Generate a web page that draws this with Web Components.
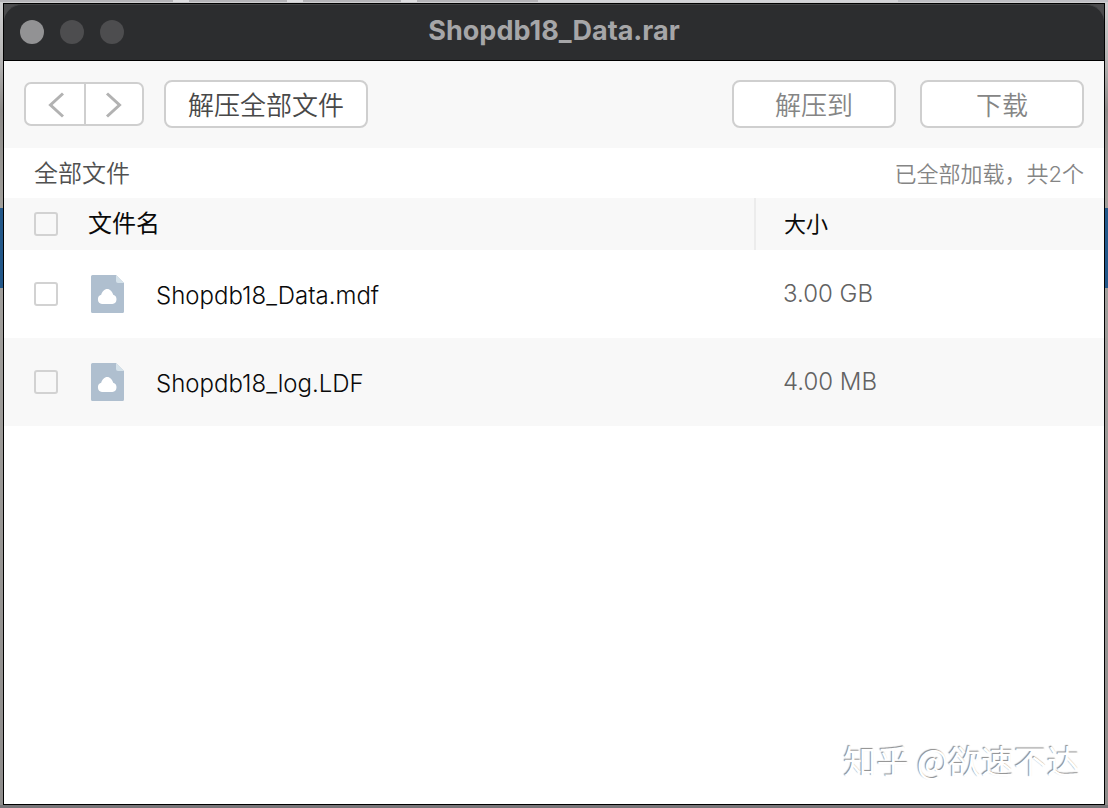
<!DOCTYPE html>
<html lang="zh-CN">
<head>
<meta charset="utf-8">
<meta name="viewport" content="width=device-width, initial-scale=1">
<title>Shopdb18_Data.rar</title>
<style>
  html, body { height: 100%; }
  body {
    margin: 0;
    font-family: Inter, "Noto Sans CJK SC", sans-serif;
    background: #8e8c8c;
  }
</style>
</head>
<body>
<archive-desktop>
  <archive-window>
    <span slot="title">Shopdb18_Data.rar</span>
    <archive-toolbar slot="toolbar">
      <nav-buttons></nav-buttons>
      <tool-button class="strong">解压全部文件</tool-button>
      <tool-button slot="end" wide>解压到</tool-button>
      <tool-button slot="end" wide>下载</tool-button>
    </archive-toolbar>
    <path-bar>
      全部文件
      <span slot="status">已全部加载，共2个</span>
    </path-bar>
    <file-table></file-table>
    <water-mark slot="mark">知乎 @欲速不达</water-mark>
  </archive-window>
</archive-desktop>

<script>
const define = (name, html, setup) => {
  const template = document.createElement('template');
  template.innerHTML = html;
  customElements.define(name, class extends HTMLElement {
    constructor() {
      super();
      this.attachShadow({ mode: 'open' }).append(template.content.cloneNode(true));
      if (setup) setup(this.shadowRoot);
    }
  });
};

/* Backdrop: a thin edge of the apps behind the window */
define('archive-desktop', `
  <style>
    :host {
      display: grid;
      box-sizing: border-box;
      min-height: 100%;
      height: 100%;
      padding: 3px;
      background:
        linear-gradient(90deg, #b4b3b7 173px, #dddde0 173px 189px, #b4b3b7 189px 287px, #dddde0 287px 303px,
          #b4b3b7 303px 401px, #dddde0 401px 417px, #b4b3b7 417px 538px, #d3d3d7 538px 898px, #bdbdc2 898px) top / 100% 2px no-repeat,
        linear-gradient(#777578, #777578) bottom / 100% 3px no-repeat,
        linear-gradient(#d0d0d2, #b5b4b4 60px, #8c8a88 110px, #a19f9b 208px, #23588a 208px 288px, #a09e9b 288px, #8e8c8b);
    }
  </style>
  <slot></slot>
`);

define('archive-window', `
  <style>
    :host {
      display: flex;
      flex-direction: column;
      position: relative;
      border: 1px solid #000;
      background: #fff;
      min-width: 0;
    }
    .frame { background: #4b4b4d; border-bottom: 1px solid #000; }
    header {
      display: grid;
      grid-template-columns: 1fr auto 1fr;
      align-items: center;
      box-sizing: border-box;
      height: 56px;
      padding: 0 16px 2px;
      border-top: 1px solid #434446;
      border-radius: 18px 18px 0 0;
      background: #2c2d2f;
    }
    .lights { display: flex; gap: 16px; }
    .lights i { width: 24px; height: 24px; border-radius: 50%; background: #4d4d4f; }
    .lights i:first-child { background: #929294; }
    h1 { margin: 0; padding-bottom: 2px; font-size: 27px; line-height: 32px; font-weight: 700; color: #a6a6a8; }
    main { flex: 1; }
  </style>
  <div class="frame">
    <header>
      <div class="lights"><i></i><i></i><i></i></div>
      <h1><slot name="title"></slot></h1>
    </header>
  </div>
  <slot name="toolbar"></slot>
  <main><slot></slot></main>
  <slot name="mark"></slot>
`);

define('archive-toolbar', `
  <style>
    :host {
      display: flex;
      justify-content: space-between;
      align-items: center;
      box-sizing: border-box;
      height: 87px;
      padding: 0 20px 2px;
      background: #f8f8f8;
    }
    div { display: flex; align-items: center; gap: 20px; }
    .end { gap: 24px; }
  </style>
  <div><slot></slot></div>
  <div class="end"><slot name="end"></slot></div>
`);

define('nav-buttons', `
  <style>
    :host { display: flex; }
    button {
      display: grid;
      place-items: center;
      box-sizing: border-box;
      width: 60px;
      height: 44px;
      margin: 0;
      padding: 2px 0 0;
      border: 2px solid #cfcfcf;
      background: #fff;
    }
    .back { width: 62px; border-radius: 7px 0 0 7px; }
    .next { width: 58px; border-left: 0; border-radius: 0 7px 7px 0; }
    svg { display: block; fill: none; stroke: #b2b2b2; stroke-width: 3; }
  </style>
  <button class="back" type="button" aria-label="后退">
    <svg width="18" height="26" viewBox="0 0 18 26"><path d="M17 1.500 4.500 13 17 24.500"/></svg>
  </button>
  <button class="next" type="button" aria-label="前进">
    <svg width="18" height="26" viewBox="0 0 18 26"><path d="M2 1.500 14.500 13 2 24.500"/></svg>
  </button>
`);

define('tool-button', `
  <style>
    :host { display: block; color: #858585; }
    :host(.strong) { color: #484848; }
    button {
      display: block;
      box-sizing: border-box;
      height: 48px;
      padding: 0 22px;
      border: 2px solid #cfcfcf;
      border-radius: 8px;
      background: #fff;
      color: inherit;
      font: 350 26px/44px "Noto Sans CJK SC", sans-serif;
      white-space: nowrap;
    }
    :host([wide]) button { min-width: 164px; }
  </style>
  <button type="button"><slot></slot></button>
`);

define('path-bar', `
  <style>
    :host {
      display: flex;
      justify-content: space-between;
      align-items: center;
      box-sizing: border-box;
      height: 50px;
      padding: 2px 20px 0 30px;
      color: #505050;
      font: 350 24px/48px Inter, "Noto Sans CJK SC", sans-serif;
    }
    .status { color: #858585; font-size: 22px; }
  </style>
  <span><slot></slot></span>
  <span class="status"><slot name="status"></slot></span>
`);

const files = [
  { name: 'Shopdb18_Data.mdf', size: '3.00 GB' },
  { name: 'Shopdb18_log.LDF', size: '4.00 MB' }
];

define('file-icon', `
  <style>:host { display: block; } svg { display: block; }</style>
  <svg width="33" height="38" viewBox="0 0 33 38" aria-hidden="true">
    <path fill="#afbfcf" d="M1.500 0H25l8 8v28.500a1.500 1.500 0 0 1-1.500 1.500h-30A1.500 1.500 0 0 1 0 36.500v-35A1.500 1.500 0 0 1 1.500 0z"/>
    <path fill="#d5e2ea" d="M25 0l8 8h-6a2 2 0 0 1-2-2z"/>
    <path fill="#fff" d="M11 29a4.800 4.800 0 0 1-.8-9.300c1-3.200 3.200-5.700 6-5.700s5 2.500 6 5.700a4.800 4.800 0 0 1-.8 9.300z"/>
  </svg>
`);

define('file-table', `
  <style>
    :host { display: block; }
    table { width: 100%; border-collapse: collapse; table-layout: fixed; }
    .pick { width: 84px; }
    .size { width: 349px; }
    th, td { padding: 0; text-align: left; font-weight: 400; white-space: nowrap; }
    thead tr { height: 52px; background: #f8f8f8; }
    tbody tr { height: 88px; }
    tbody tr:nth-child(even) { background: #f8f8f8; }
    th { font-size: 24px; line-height: 52px; color: #0a0a0a; }
    th:last-child { padding-left: 28px; border-left: 2px solid #ececec; font-size: 22px; }
    td { font-size: 24px; line-height: 88px; color: #0a0a0a; font-weight: 350; }
    td:last-child { padding-left: 28px; color: #626262; }
    td:first-child, th:first-child { padding-left: 30px; }
    .name { display: flex; align-items: center; gap: 32px; padding: 4px 0 0 3px; line-height: 84px; }
    input {
      appearance: none;
      display: block;
      box-sizing: border-box;
      width: 24px;
      height: 24px;
      margin: 0;
      border: 2px solid #d2d2d2;
      border-radius: 3px;
      background: transparent;
    }
    file-icon { margin-bottom: 4px; }
  </style>
  <table>
    <colgroup><col class="pick"><col><col class="size"></colgroup>
    <thead>
      <tr>
        <th scope="col"><input type="checkbox" aria-label="全选"></th>
        <th scope="col">文件名</th>
        <th scope="col">大小</th>
      </tr>
    </thead>
    <tbody></tbody>
  </table>
`, root => {
  root.querySelector('tbody').innerHTML = files.map((file, i) => `
    <tr>
      <td><input type="checkbox" id="file-${i}"></td>
      <td><div class="name"><file-icon></file-icon><label for="file-${i}">${file.name}</label></div></td>
      <td>${file.size}</td>
    </tr>`).join('');
});

define('water-mark', `
  <style>
    :host {
      position: absolute;
      right: 24px;
      bottom: 20px;
      color: #fff;
      font: 400 33px/48px "Noto Sans CJK SC", sans-serif;
      text-shadow: -1px -1px 1px #8c8c8c;
      pointer-events: none;
    }
  </style>
  <slot></slot>
`);
</script>
</body>
</html>
